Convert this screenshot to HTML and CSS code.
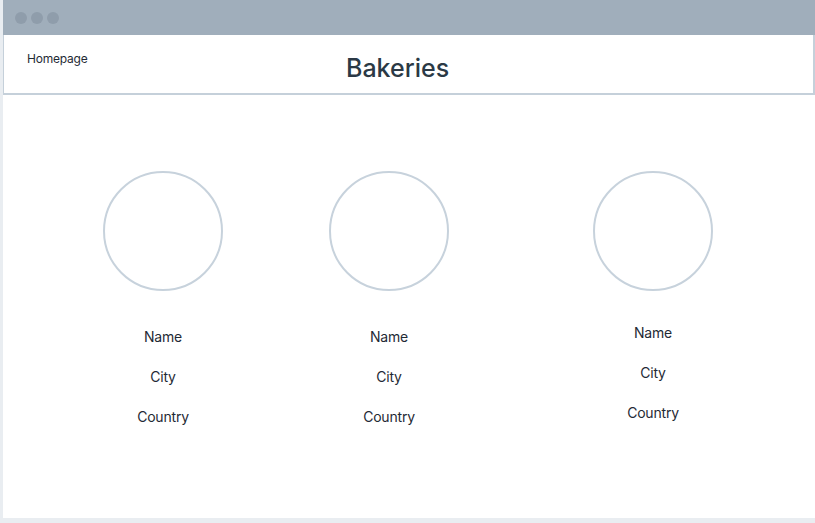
FILE: index.html
```html
<!DOCTYPE html>
<html>
<head>
<meta charset="utf-8">
<link rel="stylesheet" href="styles.css">
</head>
<body>
<div class="window">
  <div class="titlebar">
    <span class="dot"></span><span class="dot"></span><span class="dot"></span>
  </div>
  <header class="header">
    <a class="home">Homepage</a>
    <h1 class="title">Bakeries</h1>
  </header>
  <main class="main">
    <div class="card card-1">
      <div class="avatar"></div>
      <div class="info"><p>Name</p><p>City</p><p>Country</p></div>
    </div>
    <div class="card card-2">
      <div class="avatar"></div>
      <div class="info"><p>Name</p><p>City</p><p>Country</p></div>
    </div>
    <div class="card card-3">
      <div class="avatar"></div>
      <div class="info info-up"><p>Name</p><p>City</p><p>Country</p></div>
    </div>
  </main>
</div>
</body>
</html>
```

FILE: styles.css
```css
html, body {
  margin: 0;
  padding: 0;
}
body {
  background: #e9edf1;
  width: 815px;
  height: 523px;
  overflow: hidden;
  font-family: Inter, "Noto Sans", sans-serif;
  color: #2b3945;
}
.window {
  margin-left: 3px;
  height: 518px;
  display: flex;
  flex-direction: column;
  background: #ffffff;
}
.titlebar {
  height: 35px;
  background: #a0aebb;
  display: flex;
  align-items: center;
  gap: 4px;
  padding-left: 12px;
  box-sizing: border-box;
}
.dot {
  width: 12px;
  height: 12px;
  border-radius: 50%;
  background: #8f9dab;
}
.header {
  height: 60px;
  box-sizing: border-box;
  border-left: 1px solid #c5d0da;
  border-right: 2px solid #c5d0da;
  border-bottom: 2px solid #c5d0da;
  display: grid;
  grid-template-columns: 319px auto;
  padding-left: 23px;
  align-items: start;
}
.home {
  font-size: 12px;
  line-height: 16px;
  margin-top: 16px;
  letter-spacing: -0.2px;
  color: #1f2a35;
}
.title {
  margin: 17px 0 0;
  font-size: 25px;
  line-height: 32px;
  font-weight: 500;
  color: #2b3945;
}
.main {
  flex: 1;
  display: flex;
  align-items: flex-start;
  padding-top: 76px;
  padding-left: 80px;
}
.card {
  width: 160px;
  display: flex;
  flex-direction: column;
  align-items: center;
}
.card-2 { margin-left: 66px; }
.card-3 { margin-left: 104px; }
.avatar {
  width: 120px;
  height: 120px;
  box-sizing: border-box;
  border: 2px solid #c7d2dc;
  border-radius: 50%;
}
.info {
  margin-top: 36px;
  display: flex;
  flex-direction: column;
  align-items: center;
  gap: 20px;
}
.info-up { margin-top: 32px; }
.info p {
  margin: 0;
  font-size: 14px;
  line-height: 20px;
  letter-spacing: -0.2px;
  color: #1f2a35;
}
```
